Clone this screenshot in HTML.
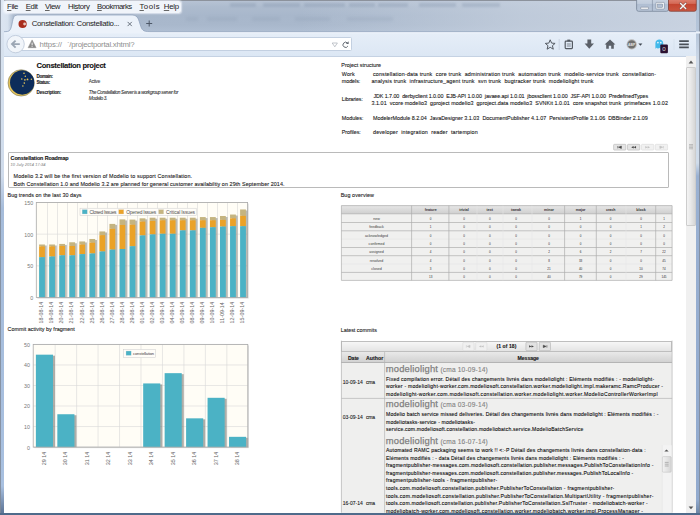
<!DOCTYPE html>
<html><head><meta charset="utf-8"><title>Constellation: Constellation project</title>
<style>
html,body{margin:0;padding:0;background:#fff;}
body{width:700px;height:515px;overflow:hidden;position:relative;font-family:"Liberation Sans",sans-serif;}
#win{position:absolute;left:0;top:0;width:700px;height:515px;overflow:hidden;background:#fff;}
.abs{position:absolute;white-space:nowrap;}
.t{position:absolute;white-space:nowrap;color:#1a1a1a;-webkit-text-stroke-width:0.1px;font-size:5.4px;line-height:7px;}
.b{font-weight:bold;}
u{text-decoration-thickness:0.5px;text-decoration-color:#666;text-underline-offset:0.6px;}
.i{font-style:italic;}
svg{position:absolute;left:0;top:0;}
</style></head><body><div id="win">

<div class="abs" style="left:0;top:0;width:700px;height:32px;background:linear-gradient(180deg,#b8c4d5 0,#adbbce 7px,#a8b7cb 16px,#a9b8cc 25px,#b0bfd3 32px);"></div>
<div class="abs" style="left:300px;top:0;width:400px;height:32px;background:linear-gradient(90deg,rgba(196,207,222,0) 0,rgba(200,210,224,0.7) 55%,rgba(206,215,228,0.85) 100%);"></div>
<div class="abs" style="left:230px;top:3.2px;width:26px;height:3.6px;background:#7f90a8;opacity:0.3;filter:blur(1.3px);"></div>
<div class="abs" style="left:263px;top:3.2px;width:37px;height:3.6px;background:#7f90a8;opacity:0.3;filter:blur(1.3px);"></div>
<div class="abs" style="left:304px;top:3.2px;width:41px;height:3.6px;background:#7f90a8;opacity:0.3;filter:blur(1.3px);"></div>
<div class="abs" style="left:349px;top:3.2px;width:26px;height:3.6px;background:#7f90a8;opacity:0.3;filter:blur(1.3px);"></div>
<div class="abs" style="left:378px;top:3.2px;width:30px;height:3.6px;background:#7f90a8;opacity:0.3;filter:blur(1.3px);"></div>
<div class="abs" style="left:419px;top:3.2px;width:37px;height:3.6px;background:#7f90a8;opacity:0.3;filter:blur(1.3px);"></div>
<div class="abs" style="left:462px;top:3.2px;width:38px;height:3.6px;background:#7f90a8;opacity:0.3;filter:blur(1.3px);"></div>
<div class="abs" style="left:186px;top:17.2px;width:12px;height:3.6px;background:#8797ad;opacity:0.22;filter:blur(1.4px);"></div>
<div class="abs" style="left:207px;top:17.2px;width:30px;height:3.6px;background:#8797ad;opacity:0.22;filter:blur(1.4px);"></div>
<div class="abs" style="left:252px;top:17.2px;width:28px;height:3.6px;background:#8797ad;opacity:0.22;filter:blur(1.4px);"></div>
<div class="abs" style="left:295px;top:17.2px;width:35px;height:3.6px;background:#8797ad;opacity:0.22;filter:blur(1.4px);"></div>
<div class="abs" style="left:347px;top:17.2px;width:46px;height:3.6px;background:#8797ad;opacity:0.22;filter:blur(1.4px);"></div>
<div class="abs" style="left:0;top:0;width:14px;height:32px;background:linear-gradient(90deg,rgba(226,234,245,0.95) 0,rgba(220,230,242,0.9) 55%,rgba(214,225,239,0) 100%);"></div>
<div class="abs" style="left:0;top:0;width:700px;height:0.8px;background:#8c929c;"></div>
<div class="abs" style="left:0;top:32px;width:700px;height:24.2px;background:linear-gradient(180deg,#e6eef8,#dce7f4);"></div>
<div class="abs" style="left:0;top:0;width:4px;height:515px;background:linear-gradient(180deg,#dde6f2 0,#d6e1ee 60px,#cfdbeb 176px,#a6bcda 208px,#a8c0e0 486px,#62799a 511px);"></div>
<div class="abs" style="left:0;top:0;width:0.8px;height:515px;background:#7f8896;opacity:0.8;"></div>
<div class="abs" style="left:696.2px;top:0;width:3.8px;height:515px;background:linear-gradient(180deg,#aebfd4 0,#b6c6da 33px,#cdd9e8 60px,#d0dcea 163px,#9ab1d2 176px,#92aace 500px,#7088a8 512px);"></div>
<div class="abs" style="left:699.3px;top:0;width:0.7px;height:515px;background:#7f8896;opacity:0.8;"></div>
<div class="abs" style="left:0;top:512.6px;width:700px;height:3px;background:#4f6b8b;"></div>

<div class="abs" style="left:4px;top:1.2px;width:177px;height:12px;background:rgba(243,247,252,0.95);border-radius:2.5px;box-shadow:0 0 1.5px 1px rgba(243,247,252,0.7);"></div>
<div class="abs" style="left:7px;top:2.15px;font-size:7.8px;line-height:10.1px;color:#1c1c1c;letter-spacing:-0.392px;"><u>F</u>ile</div>
<div class="abs" style="left:25.75px;top:2.15px;font-size:7.8px;line-height:10.1px;color:#1c1c1c;letter-spacing:-0.423px;"><u>E</u>dit</div>
<div class="abs" style="left:45px;top:2.15px;font-size:7.8px;line-height:10.1px;color:#1c1c1c;letter-spacing:-0.442px;"><u>V</u>iew</div>
<div class="abs" style="left:68px;top:2.15px;font-size:7.8px;line-height:10.1px;color:#1c1c1c;letter-spacing:-0.396px;">Hi<u>s</u>tory</div>
<div class="abs" style="left:97px;top:2.15px;font-size:7.8px;line-height:10.1px;color:#1c1c1c;letter-spacing:-0.474px;"><u>B</u>ookmarks</div>
<div class="abs" style="left:139.5px;top:2.15px;font-size:7.8px;line-height:10.1px;color:#1c1c1c;letter-spacing:0.458px;"><u>T</u>ools</div>
<div class="abs" style="left:163.8px;top:2.15px;font-size:7.8px;line-height:10.1px;color:#1c1c1c;letter-spacing:-0.236px;"><u>H</u>elp</div>

<svg width="700" height="60" viewBox="0 0 700 60">
<path d="M4 32.2 C10 32.2 10.5 30.8 12 24 C13.5 16.2 14 15 19 15 L131 15 C137 15 138 17.2 140 24 C142 30.6 143 31.6 150 31.6 L700 31.6 L700 33.4 L4 33.4 Z" fill="#ecf2fa"/>
<path d="M4 31.7 C10 31.7 10.5 30.6 12 24 C13.5 16.2 14 15 19 15 L131 15 C137 15 138 17.2 140 24 C142 30.6 143 31.6 150 31.6 L696 31.6" fill="none" stroke="#8b9eb9" stroke-width="0.7"/>
<circle cx="22.6" cy="24" r="4.1" fill="#a92d1d"/>
<circle cx="24.6" cy="24" r="1.4" fill="#e8c8c0"/>
<path d="M127.6 21.9 L131.8 26.1 M131.8 21.9 L127.6 26.1" stroke="#6a7480" stroke-width="1"/>
<path d="M146.2 23.5 H152.2 M149.2 20.5 V26.5" stroke="#4d5868" stroke-width="1"/>
</svg>
<div class="abs" style="left:31.75px;top:18.95px;font-size:7.8px;line-height:10.1px;color:#222;letter-spacing:-0.306px;">Constellation: Constellatio...</div>

<svg width="700" height="60" viewBox="0 0 700 60">
<defs>
<linearGradient id="wb" x1="0" y1="0" x2="0" y2="1"><stop offset="0" stop-color="#cdd7e4"/><stop offset="0.45" stop-color="#c2cddd"/><stop offset="0.5" stop-color="#b0bed2"/><stop offset="1" stop-color="#b9c6d8"/></linearGradient>
<linearGradient id="wc" x1="0" y1="0" x2="0" y2="1"><stop offset="0" stop-color="#e08f7f"/><stop offset="0.45" stop-color="#d56a57"/><stop offset="0.5" stop-color="#c44530"/><stop offset="1" stop-color="#cb5640"/></linearGradient>
</defs>
<rect x="636.6" y="-3" width="31.9" height="14.3" rx="2" fill="url(#wb)" stroke="#6f7c90" stroke-width="0.7"/>
<line x1="652.4" y1="0" x2="652.4" y2="11" stroke="#7a889c" stroke-width="0.6"/>
<rect x="668.5" y="-3" width="27.8" height="14.3" rx="2" fill="url(#wc)" stroke="#7a3a30" stroke-width="0.7"/>
<rect x="640.7" y="7.2" width="7.8" height="2" rx="0.4" fill="#fff" stroke="#6a7688" stroke-width="0.5"/>
<rect x="656.8" y="3.2" width="6.6" height="5" fill="none" stroke="#fff" stroke-width="1.3"/>
<rect x="656" y="2.4" width="8.2" height="6.6" rx="0.4" fill="none" stroke="#687488" stroke-width="0.45"/>
<rect x="657.6" y="4" width="5" height="3.4" fill="none" stroke="#687488" stroke-width="0.4"/>
<path d="M680.6 3.4 L685.6 8.4 M685.6 3.4 L680.6 8.4" stroke="#8a4a40" stroke-width="2.3" stroke-linecap="square"/>
<path d="M680.6 3.4 L685.6 8.4 M685.6 3.4 L680.6 8.4" stroke="#f4f4f4" stroke-width="1.4" stroke-linecap="square"/>
</svg>

<div class="abs" style="left:17px;top:37.2px;width:335.4px;height:13.7px;background:#fff;border:0.6px solid #c3d0e1;border-radius:1.5px;box-sizing:border-box;"></div>
<svg width="700" height="60" viewBox="0 0 700 60">
<circle cx="15.6" cy="44.1" r="8.7" fill="#f1f5fa" stroke="#b3c0d2" stroke-width="0.7"/>
<path d="M19.8 44.1 H12.2 M15.6 40.6 L12 44.1 L15.6 47.6" fill="none" stroke="#9ba6b4" stroke-width="1.9"/>
<path d="M32.1 39.9 L36.1 47.7 H28.1 Z" fill="#8a8a8a" stroke="#8a8a8a" stroke-width="0.5" stroke-linejoin="round"/>
<rect x="31.65" y="42.6" width="0.9" height="2.7" fill="#fff"/><rect x="31.65" y="45.9" width="0.9" height="0.9" fill="#fff"/>
<path d="M332.2 43 L337.4 43 L334.8 46.8 Z" fill="none" stroke="#a8aeb6" stroke-width="0.7"/>
<path d="M347.6 43.2 A2.6 2.6 0 1 0 347.9 46" fill="none" stroke="#606770" stroke-width="0.95"/>
<path d="M348.6 41.3 V44 H345.9 Z" fill="#606770"/>
<!-- star -->
<path d="M550.2 39.8 L551.6 43.1 L555.1 43.4 L552.4 45.7 L553.3 49.2 L550.2 47.3 L547.1 49.2 L548 45.7 L545.3 43.4 L548.8 43.1 Z" fill="none" stroke="#545a62" stroke-width="1" stroke-linejoin="round"/>
<line x1="559.2" y1="39" x2="559.2" y2="50" stroke="#b9c4d4" stroke-width="0.6"/>
<!-- clipboard -->
<rect x="565.2" y="41.2" width="7.2" height="7.4" rx="0.8" fill="none" stroke="#545a62" stroke-width="1.2"/>
<rect x="567.3" y="39.6" width="3" height="1.8" fill="#545a62"/>
<path d="M566.8 44 H570.8 M566.8 46 H570.8" stroke="#545a62" stroke-width="0.7"/>
<!-- download -->
<path d="M587.4 39.5 H591.2 V43.6 H594 L589.3 48.8 L584.6 43.6 H587.4 Z" fill="#5b6068"/>
<!-- home -->
<path d="M610 39.6 L615.4 44.6 H613.8 V48.8 H611.2 V45.8 H608.8 V48.8 H606.2 V44.6 H604.6 Z" fill="#5b6068"/>
<!-- ABP -->
<circle cx="631.7" cy="44.4" r="5.1" fill="#b9b9b9"/><circle cx="631.7" cy="44.4" r="4.2" fill="#6f6f6f"/>
<text x="631.7" y="45.6" font-size="3.4" font-weight="bold" fill="#e4e4e4" text-anchor="middle" font-family="Liberation Sans, sans-serif">ABP</text>
<path d="M638.4 43.4 H642.4 L640.4 45.8 Z" fill="#3f4650"/>
<!-- ghost -->
<path d="M655.4 48.8 V43.2 C655.4 38.2 663.2 38.2 663.2 43.2 V48.8 L661.9 47.7 L660.6 48.8 L659.3 47.7 L658 48.8 L656.7 47.7 Z" fill="#42b9ea"/>
<circle cx="657.9" cy="42.6" r="0.85" fill="#e8f6fd"/><circle cx="660.8" cy="42.6" r="0.85" fill="#e8f6fd"/>
<rect x="660.3" y="44.6" width="7.6" height="8.6" rx="1" fill="#2a1030"/>
<text x="664.1" y="51.3" font-size="6.2" fill="#d8d8d8" text-anchor="middle" font-family="Liberation Sans, sans-serif">0</text>
<line x1="674" y1="39" x2="674" y2="50" stroke="#cfd9e6" stroke-width="0.5"/>
<!-- hamburger -->
<path d="M679.2 41.2 H688.8 M679.2 44.3 H688.8 M679.2 47.4 H688.8" stroke="#4a5058" stroke-width="1.7"/>
</svg>
<div class="abs" style="left:39.5px;top:39.95px;font-size:7.8px;line-height:10.1px;color:#8f8f8f;letter-spacing:-0.145px;">https://</div>
<div class="abs" style="left:67px;top:39.95px;font-size:7.8px;line-height:10.1px;color:#8f8f8f;letter-spacing:-0.254px;">`/projectportal.xhtml?</div>

<div class="abs" style="left:4px;top:56.3px;width:692px;height:456.3px;background:#fff;"></div>
<div class="abs" style="left:4px;top:55.6px;width:692px;height:0.8px;background:#c5d2e3;"></div>
<div class="abs" style="left:686px;top:56.3px;width:10px;height:456.3px;background:#f0f0f0;"></div>
<div class="abs" style="left:686.2px;top:67px;width:9.6px;height:159.4px;background:linear-gradient(90deg,#f4f4f4 0,#e9e9e9 45%,#d6d6d6 100%);border:0.5px solid #cdcdcd;box-sizing:border-box;border-radius:1px;"></div>
<svg width="700" height="515" viewBox="0 0 700 515">
<path d="M688.6 63.4 L691 60.6 L693.4 63.4 Z" fill="#555"/>
<path d="M688.6 506.4 L691 509.2 L693.4 506.4 Z" fill="#555"/>
<path d="M689 144.6 H693 M689 146 H693 M689 147.4 H693 M689 148.8 H693" stroke="#9a9a9a" stroke-width="0.6"/>
</svg>
<svg width="700" height="515" viewBox="0 0 700 515">
<defs><clipPath id="lg"><circle cx="21.2" cy="82.9" r="13.2"/></clipPath></defs>
<circle cx="21.2" cy="82.9" r="13.2" fill="#e3c35a"/>
<circle cx="21.2" cy="82.9" r="13.2" fill="none" stroke="#6b6a5a" stroke-width="0.5"/>
<circle cx="22.25" cy="82.45" r="12.25" fill="#0d2c5a" clip-path="url(#lg)"/>
<g fill="#e6c65a">
<circle cx="24" cy="73.3" r="0.8"/><circle cx="25.3" cy="76.2" r="0.75"/><circle cx="21.8" cy="79" r="0.75"/>
<circle cx="24.9" cy="79.9" r="0.8"/><circle cx="27.5" cy="79.4" r="0.9"/><circle cx="31.4" cy="79.2" r="0.8"/>
<circle cx="24.3" cy="83.1" r="0.8"/><circle cx="22.9" cy="85.9" r="0.75"/>
</g>
</svg>
<div class="t b" style="left:36.6px;top:61px;font-size:7.6px;line-height:10px;color:#111;letter-spacing:-0.314px;">Constellation project</div>
<div class="t b" style="left:36.6px;top:72.60px;letter-spacing:-0.343px;font-size:4.6px;color:#222;">Domain:</div>
<div class="t b" style="left:36.6px;top:78.60px;letter-spacing:-0.334px;font-size:4.6px;color:#222;">Status:</div>
<div class="t b" style="left:36.6px;top:88.70px;letter-spacing:-0.195px;font-size:4.6px;color:#222;">Description:</div>
<div class="t " style="left:88.8px;top:78.40px;letter-spacing:-0.213px;font-size:4.6px;color:#444;">Active</div>
<div class="t i" style="left:88.8px;top:89.30px;letter-spacing:-0.352px;font-size:4.8px;color:#3a3a3a;">The Constellation Server is a workgroup server for</div>
<div class="t i" style="left:88.8px;top:95.30px;letter-spacing:-0.390px;font-size:4.8px;color:#3a3a3a;">Modelio 3.</div>
<div class="t " style="left:341.3px;top:61.80px;letter-spacing:0.034px;">Project structure</div>
<div class="t " style="left:341.8px;top:70.80px;letter-spacing:0.100px;">Work</div>
<div class="t " style="left:341.8px;top:78.20px;letter-spacing:-0.058px;">models:</div>
<div class="t " style="left:372.9px;top:70.80px;letter-spacing:0.160px;">constellation-data trunk&nbsp; core trunk&nbsp; administration trunk&nbsp; automation trunk&nbsp; modelio-service trunk&nbsp; constellation-</div>
<div class="t " style="left:371.4px;top:78.20px;letter-spacing:0.141px;">analysis trunk&nbsp; infrastructure_agent trunk&nbsp; svn trunk&nbsp; bugtracker trunk&nbsp; modeliolight trunk</div>
<div class="t " style="left:341.8px;top:96.20px;letter-spacing:-0.121px;">Libraries:</div>
<div class="t " style="left:373.4px;top:92.60px;letter-spacing:-0.077px;">JDK 1.7.00&nbsp; derbyclient 1.0.00&nbsp; EJB-API 1.0.00&nbsp; javaee.api 1.0.01&nbsp; jbossclient 1.0.00&nbsp; JSF-API 1.0.00&nbsp; PredefinedTypes</div>
<div class="t " style="left:371.4px;top:100.10px;letter-spacing:0.049px;">3.1.01&nbsp; vcore modelio3&nbsp; gproject modelio3&nbsp; gproject.data modelio3&nbsp; SVNKit 1.0.01&nbsp; core snapshot trunk&nbsp; primefaces 1.0.02</div>
<div class="t " style="left:341.8px;top:114.50px;letter-spacing:-0.039px;">Modules:</div>
<div class="t " style="left:372.9px;top:114.50px;letter-spacing:0.010px;">ModelerModule 8.2.04&nbsp; JavaDesigner 3.1.03&nbsp; DocumentPublisher 4.1.07&nbsp; PersistentProfile 3.1.06&nbsp; DBBinder 2.1.09</div>
<div class="t " style="left:341.8px;top:129.00px;letter-spacing:-0.056px;">Profiles:</div>
<div class="t " style="left:373px;top:129.00px;letter-spacing:0.141px;">developer&nbsp; integration&nbsp; reader&nbsp; tartempion</div>
<svg width="700" height="515" viewBox="0 0 700 515">
<rect x="613.6" y="144.3" width="12.3" height="5.8" rx="0.8" fill="#e4e4e4" stroke="#aaa" stroke-width="0.5"/>
<path d="M617.75 146.0 V148.4 M621.35 146.0 L618.55 147.2 L621.35 148.4 Z" stroke="#444" stroke-width="0.6" fill="#444"/>
<rect x="627.5" y="144.3" width="12.3" height="5.8" rx="0.8" fill="#e4e4e4" stroke="#aaa" stroke-width="0.5"/>
<path d="M633.65 146.0 L631.25 147.2 L633.65 148.4 Z M636.05 146.0 L633.65 147.2 L636.05 148.4 Z" fill="#444"/>
<rect x="641.5" y="144.3" width="12.3" height="5.8" rx="0.8" fill="#f1f1f1" stroke="#d4d4d4" stroke-width="0.5"/>
<path d="M647.65 146.0 L650.05 147.2 L647.65 148.4 Z M645.25 146.0 L647.65 147.2 L645.25 148.4 Z" fill="#c4c4c4"/>
<rect x="655.3" y="144.3" width="12.3" height="5.8" rx="0.8" fill="#f1f1f1" stroke="#d4d4d4" stroke-width="0.5"/>
<path d="M663.4499999999999 146.0 V148.4 M659.8499999999999 146.0 L662.65 147.2 L659.8499999999999 148.4 Z" stroke="#c4c4c4" stroke-width="0.6" fill="#c4c4c4"/>
</svg>
<div class="abs" style="left:8.2px;top:151.5px;width:660.5px;height:36.2px;border:0.7px solid #bababa;box-sizing:border-box;border-radius:1px;background:#fff;"></div>
<div class="t b" style="left:10.6px;top:154.50px;letter-spacing:-0.110px;font-size:5.4px;color:#111;">Constellation Roadmap</div>
<div class="t i" style="left:10.6px;top:160.80px;letter-spacing:0.113px;font-size:3.9px;color:#999;">10 July 2014 17:34</div>
<div class="t " style="left:13.5px;top:172.80px;letter-spacing:0.139px;color:#222;">Modelio 3.2 will be the first version of Modelio to support Constellation.</div>
<div class="t " style="left:13.5px;top:180.80px;letter-spacing:0.082px;color:#222;">Both Constellation 1.0 and Modelio 3.2 are planned for general customer availabiltiy on 29th September 2014.</div>
<div class="t " style="left:7.5px;top:191.60px;letter-spacing:0.043px;color:#222;">Bug trends on the last 30 days</div>
<div class="t " style="left:340.7px;top:191.80px;letter-spacing:0.082px;color:#222;">Bug overview</div>
<div class="t " style="left:7.5px;top:326.10px;letter-spacing:0.033px;color:#222;">Commit activity by fragment</div>
<div class="t " style="left:340.7px;top:326.50px;letter-spacing:-0.008px;color:#222;">Latest commits</div>
<svg width="700" height="515" viewBox="0 0 700 515">
<rect x="37.3" y="203.5" width="211.3" height="95.0" fill="#bdbdbd" opacity="0.6"/>
<rect x="36.3" y="202.5" width="211.3" height="95.0" fill="#fffdf6"/>
<path d="M36.3 297.50 H247.6 M36.3 265.83 H247.6 M36.3 234.17 H247.6 M36.3 202.50 H247.6 M47.50 202.5 V297.5 M57.50 202.5 V297.5 M67.50 202.5 V297.5 M77.50 202.5 V297.5 M87.50 202.5 V297.5 M97.50 202.5 V297.5 M107.50 202.5 V297.5 M117.50 202.5 V297.5 M127.50 202.5 V297.5 M137.50 202.5 V297.5 M147.50 202.5 V297.5 M157.50 202.5 V297.5 M167.50 202.5 V297.5 M177.50 202.5 V297.5 M187.50 202.5 V297.5 M197.50 202.5 V297.5 M207.50 202.5 V297.5 M217.50 202.5 V297.5 M227.50 202.5 V297.5 M237.50 202.5 V297.5" stroke="#d8d8d8" stroke-width="0.6" fill="none"/>
<rect x="40.90" y="245.49" width="5.80" height="52.01" fill="#85857c" opacity="0.55"/>
<rect x="39.10" y="244.49" width="5.8" height="1.84" fill="#c5b47f"/>
<rect x="39.10" y="246.33" width="5.8" height="10.83" fill="#eaa228"/>
<rect x="39.10" y="257.16" width="5.8" height="40.34" fill="#4bb2c5"/>
<rect x="50.95" y="245.49" width="5.80" height="52.01" fill="#85857c" opacity="0.55"/>
<rect x="49.15" y="244.49" width="5.8" height="1.84" fill="#c5b47f"/>
<rect x="49.15" y="246.33" width="5.8" height="10.20" fill="#eaa228"/>
<rect x="49.15" y="256.52" width="5.8" height="40.98" fill="#4bb2c5"/>
<rect x="61.00" y="244.92" width="5.80" height="52.58" fill="#85857c" opacity="0.55"/>
<rect x="59.20" y="243.92" width="5.8" height="2.03" fill="#c5b47f"/>
<rect x="59.20" y="245.95" width="5.8" height="9.37" fill="#eaa228"/>
<rect x="59.20" y="255.32" width="5.8" height="42.18" fill="#4bb2c5"/>
<rect x="71.05" y="243.27" width="5.80" height="54.23" fill="#85857c" opacity="0.55"/>
<rect x="69.25" y="242.27" width="5.8" height="3.67" fill="#c5b47f"/>
<rect x="69.25" y="245.95" width="5.8" height="9.37" fill="#eaa228"/>
<rect x="69.25" y="255.32" width="5.8" height="42.18" fill="#4bb2c5"/>
<rect x="81.10" y="242.45" width="5.80" height="55.05" fill="#85857c" opacity="0.55"/>
<rect x="79.30" y="241.45" width="5.8" height="3.04" fill="#c5b47f"/>
<rect x="79.30" y="244.49" width="5.8" height="9.63" fill="#eaa228"/>
<rect x="79.30" y="254.12" width="5.8" height="43.38" fill="#4bb2c5"/>
<rect x="91.15" y="239.98" width="5.80" height="57.52" fill="#85857c" opacity="0.55"/>
<rect x="89.35" y="238.98" width="5.8" height="3.67" fill="#c5b47f"/>
<rect x="89.35" y="242.65" width="5.8" height="10.83" fill="#eaa228"/>
<rect x="89.35" y="253.48" width="5.8" height="44.02" fill="#4bb2c5"/>
<rect x="101.20" y="232.44" width="5.80" height="65.06" fill="#85857c" opacity="0.55"/>
<rect x="99.40" y="231.44" width="5.8" height="3.67" fill="#c5b47f"/>
<rect x="99.40" y="235.12" width="5.8" height="16.34" fill="#eaa228"/>
<rect x="99.40" y="251.46" width="5.8" height="46.04" fill="#4bb2c5"/>
<rect x="111.25" y="224.91" width="5.80" height="72.59" fill="#85857c" opacity="0.55"/>
<rect x="109.45" y="223.91" width="5.8" height="4.88" fill="#c5b47f"/>
<rect x="109.45" y="228.78" width="5.8" height="20.84" fill="#eaa228"/>
<rect x="109.45" y="249.62" width="5.8" height="47.88" fill="#4bb2c5"/>
<rect x="121.30" y="220.41" width="5.80" height="77.09" fill="#85857c" opacity="0.55"/>
<rect x="119.50" y="219.41" width="5.8" height="5.51" fill="#c5b47f"/>
<rect x="119.50" y="224.92" width="5.8" height="24.07" fill="#eaa228"/>
<rect x="119.50" y="248.99" width="5.8" height="48.51" fill="#4bb2c5"/>
<rect x="131.35" y="220.60" width="5.80" height="76.90" fill="#85857c" opacity="0.55"/>
<rect x="129.55" y="219.60" width="5.8" height="5.07" fill="#c5b47f"/>
<rect x="129.55" y="224.67" width="5.8" height="21.53" fill="#eaa228"/>
<rect x="129.55" y="246.20" width="5.8" height="51.30" fill="#4bb2c5"/>
<rect x="141.40" y="219.33" width="5.80" height="78.17" fill="#85857c" opacity="0.55"/>
<rect x="139.60" y="218.33" width="5.8" height="3.17" fill="#c5b47f"/>
<rect x="139.60" y="221.50" width="5.8" height="13.93" fill="#eaa228"/>
<rect x="139.60" y="235.43" width="5.8" height="62.07" fill="#4bb2c5"/>
<rect x="151.45" y="218.70" width="5.80" height="78.80" fill="#85857c" opacity="0.55"/>
<rect x="149.65" y="217.70" width="5.8" height="3.17" fill="#c5b47f"/>
<rect x="149.65" y="220.87" width="5.8" height="13.55" fill="#eaa228"/>
<rect x="149.65" y="234.42" width="5.8" height="63.08" fill="#4bb2c5"/>
<rect x="161.50" y="218.70" width="5.80" height="78.80" fill="#85857c" opacity="0.55"/>
<rect x="159.70" y="217.70" width="5.8" height="2.53" fill="#c5b47f"/>
<rect x="159.70" y="220.23" width="5.8" height="13.55" fill="#eaa228"/>
<rect x="159.70" y="233.79" width="5.8" height="63.71" fill="#4bb2c5"/>
<rect x="171.55" y="218.70" width="5.80" height="78.80" fill="#85857c" opacity="0.55"/>
<rect x="169.75" y="217.70" width="5.8" height="2.53" fill="#c5b47f"/>
<rect x="169.75" y="220.23" width="5.8" height="13.55" fill="#eaa228"/>
<rect x="169.75" y="233.79" width="5.8" height="63.71" fill="#4bb2c5"/>
<rect x="181.60" y="218.70" width="5.80" height="78.80" fill="#85857c" opacity="0.55"/>
<rect x="179.80" y="217.70" width="5.8" height="2.53" fill="#c5b47f"/>
<rect x="179.80" y="220.23" width="5.8" height="10.13" fill="#eaa228"/>
<rect x="179.80" y="230.37" width="5.8" height="67.13" fill="#4bb2c5"/>
<rect x="191.65" y="218.70" width="5.80" height="78.80" fill="#85857c" opacity="0.55"/>
<rect x="189.85" y="217.70" width="5.8" height="2.53" fill="#c5b47f"/>
<rect x="189.85" y="220.23" width="5.8" height="10.13" fill="#eaa228"/>
<rect x="189.85" y="230.37" width="5.8" height="67.13" fill="#4bb2c5"/>
<rect x="201.70" y="218.07" width="5.80" height="79.43" fill="#85857c" opacity="0.55"/>
<rect x="199.90" y="217.07" width="5.8" height="3.17" fill="#c5b47f"/>
<rect x="199.90" y="220.23" width="5.8" height="7.60" fill="#eaa228"/>
<rect x="199.90" y="227.83" width="5.8" height="69.67" fill="#4bb2c5"/>
<rect x="211.75" y="218.07" width="5.80" height="79.43" fill="#85857c" opacity="0.55"/>
<rect x="209.95" y="217.07" width="5.8" height="3.17" fill="#c5b47f"/>
<rect x="209.95" y="220.23" width="5.8" height="6.97" fill="#eaa228"/>
<rect x="209.95" y="227.20" width="5.8" height="70.30" fill="#4bb2c5"/>
<rect x="221.80" y="216.99" width="5.80" height="80.51" fill="#85857c" opacity="0.55"/>
<rect x="220.00" y="215.99" width="5.8" height="3.86" fill="#c5b47f"/>
<rect x="220.00" y="219.85" width="5.8" height="6.71" fill="#eaa228"/>
<rect x="220.00" y="226.57" width="5.8" height="70.93" fill="#4bb2c5"/>
<rect x="231.85" y="215.53" width="5.80" height="81.97" fill="#85857c" opacity="0.55"/>
<rect x="230.05" y="214.53" width="5.8" height="3.80" fill="#c5b47f"/>
<rect x="230.05" y="218.33" width="5.8" height="7.85" fill="#eaa228"/>
<rect x="230.05" y="226.19" width="5.8" height="71.31" fill="#4bb2c5"/>
<rect x="241.90" y="210.47" width="5.80" height="87.03" fill="#85857c" opacity="0.55"/>
<rect x="240.10" y="209.47" width="5.8" height="6.33" fill="#c5b47f"/>
<rect x="240.10" y="215.80" width="5.8" height="10.39" fill="#eaa228"/>
<rect x="240.10" y="226.19" width="5.8" height="71.31" fill="#4bb2c5"/>
<rect x="36.3" y="202.5" width="211.3" height="95.0" fill="none" stroke="#aaa" stroke-width="0.8"/>
<text x="33.099999999999994" y="299.90" font-size="5.3" fill="#777" text-anchor="end" font-family="Liberation Sans, sans-serif">0</text>
<text x="33.099999999999994" y="268.23" font-size="5.3" fill="#777" text-anchor="end" font-family="Liberation Sans, sans-serif">50</text>
<text x="33.099999999999994" y="236.57" font-size="5.3" fill="#777" text-anchor="end" font-family="Liberation Sans, sans-serif">100</text>
<text x="33.099999999999994" y="204.90" font-size="5.3" fill="#777" text-anchor="end" font-family="Liberation Sans, sans-serif">150</text>
<text transform="translate(43.30 323.4) rotate(-90)" font-size="5.4" fill="#666" font-family="Liberation Sans, sans-serif">18-08-14</text>
<text transform="translate(53.35 323.4) rotate(-90)" font-size="5.4" fill="#666" font-family="Liberation Sans, sans-serif">19-08-14</text>
<text transform="translate(63.40 323.4) rotate(-90)" font-size="5.4" fill="#666" font-family="Liberation Sans, sans-serif">20-08-14</text>
<text transform="translate(73.45 323.4) rotate(-90)" font-size="5.4" fill="#666" font-family="Liberation Sans, sans-serif">21-08-14</text>
<text transform="translate(83.50 323.4) rotate(-90)" font-size="5.4" fill="#666" font-family="Liberation Sans, sans-serif">22-08-14</text>
<text transform="translate(93.55 323.4) rotate(-90)" font-size="5.4" fill="#666" font-family="Liberation Sans, sans-serif">25-08-14</text>
<text transform="translate(103.60 323.4) rotate(-90)" font-size="5.4" fill="#666" font-family="Liberation Sans, sans-serif">26-08-14</text>
<text transform="translate(113.65 323.4) rotate(-90)" font-size="5.4" fill="#666" font-family="Liberation Sans, sans-serif">27-08-14</text>
<text transform="translate(123.70 323.4) rotate(-90)" font-size="5.4" fill="#666" font-family="Liberation Sans, sans-serif">28-08-14</text>
<text transform="translate(133.75 323.4) rotate(-90)" font-size="5.4" fill="#666" font-family="Liberation Sans, sans-serif">29-08-14</text>
<text transform="translate(143.80 323.4) rotate(-90)" font-size="5.4" fill="#666" font-family="Liberation Sans, sans-serif">01-09-14</text>
<text transform="translate(153.85 323.4) rotate(-90)" font-size="5.4" fill="#666" font-family="Liberation Sans, sans-serif">02-09-14</text>
<text transform="translate(163.90 323.4) rotate(-90)" font-size="5.4" fill="#666" font-family="Liberation Sans, sans-serif">03-09-14</text>
<text transform="translate(173.95 323.4) rotate(-90)" font-size="5.4" fill="#666" font-family="Liberation Sans, sans-serif">04-09-14</text>
<text transform="translate(184.00 323.4) rotate(-90)" font-size="5.4" fill="#666" font-family="Liberation Sans, sans-serif">05-09-14</text>
<text transform="translate(194.05 323.4) rotate(-90)" font-size="5.4" fill="#666" font-family="Liberation Sans, sans-serif">08-09-14</text>
<text transform="translate(204.10 323.4) rotate(-90)" font-size="5.4" fill="#666" font-family="Liberation Sans, sans-serif">09-09-14</text>
<text transform="translate(214.15 323.4) rotate(-90)" font-size="5.4" fill="#666" font-family="Liberation Sans, sans-serif">10-09-14</text>
<text transform="translate(224.20 323.4) rotate(-90)" font-size="5.4" fill="#666" font-family="Liberation Sans, sans-serif">11-09-14</text>
<text transform="translate(234.25 323.4) rotate(-90)" font-size="5.4" fill="#666" font-family="Liberation Sans, sans-serif">12-09-14</text>
<text transform="translate(244.30 323.4) rotate(-90)" font-size="5.4" fill="#666" font-family="Liberation Sans, sans-serif">15-09-14</text>
<rect x="80" y="208.2" width="116.2" height="7.2" fill="#fffdf8" stroke="#ccc" stroke-width="0.5"/>
<rect x="82.1" y="209.6" width="5.2" height="4.4" fill="#4bb2c5" stroke="#ddd" stroke-width="0.3"/>
<text x="89.6" y="214.3" font-size="4.9" fill="#505050" textLength="26.9" lengthAdjust="spacing" font-family="Liberation Sans, sans-serif">Closed Issues</text>
<rect x="118.6" y="209.6" width="5.2" height="4.4" fill="#eaa228" stroke="#ddd" stroke-width="0.3"/>
<text x="126.2" y="214.3" font-size="4.9" fill="#505050" textLength="30" lengthAdjust="spacing" font-family="Liberation Sans, sans-serif">Opened Issues</text>
<rect x="158.5" y="209.6" width="5.2" height="4.4" fill="#c5b47f" stroke="#ddd" stroke-width="0.3"/>
<text x="166" y="214.3" font-size="4.9" fill="#505050" textLength="29" lengthAdjust="spacing" font-family="Liberation Sans, sans-serif">Critical Issues</text>
</svg>
<svg width="700" height="515" viewBox="0 0 700 515">
<rect x="34.2" y="345.4" width="214.60000000000002" height="102.70000000000005" fill="#bdbdbd" opacity="0.6"/>
<rect x="33.2" y="344.4" width="214.60000000000002" height="102.70000000000005" fill="#fffdf6"/>
<path d="M33.2 447.10 H247.8 M33.2 426.56 H247.8 M33.2 406.02 H247.8 M33.2 385.48 H247.8 M33.2 364.94 H247.8 M33.2 344.40 H247.8 M55.16 344.4 V447.1 M76.62 344.4 V447.1 M98.08 344.4 V447.1 M119.54 344.4 V447.1 M141.00 344.4 V447.1 M162.46 344.4 V447.1 M183.92 344.4 V447.1 M205.38 344.4 V447.1 M226.84 344.4 V447.1" stroke="#d8d8d8" stroke-width="0.6" fill="none"/>
<rect x="37.88" y="355.67" width="17.1" height="91.43" fill="#6e6e68" opacity="0.55"/>
<rect x="35.88" y="354.67" width="17.1" height="92.43" fill="#4bb2c5"/>
<rect x="59.34" y="415.24" width="17.1" height="31.86" fill="#6e6e68" opacity="0.55"/>
<rect x="57.34" y="414.24" width="17.1" height="32.86" fill="#4bb2c5"/>
<rect x="145.18" y="384.43" width="17.1" height="62.67" fill="#6e6e68" opacity="0.55"/>
<rect x="143.18" y="383.43" width="17.1" height="63.67" fill="#4bb2c5"/>
<rect x="166.64" y="374.16" width="17.1" height="72.94" fill="#6e6e68" opacity="0.55"/>
<rect x="164.64" y="373.16" width="17.1" height="73.94" fill="#4bb2c5"/>
<rect x="188.10" y="419.34" width="17.1" height="27.76" fill="#6e6e68" opacity="0.55"/>
<rect x="186.10" y="418.34" width="17.1" height="28.76" fill="#4bb2c5"/>
<rect x="209.56" y="398.80" width="17.1" height="48.30" fill="#6e6e68" opacity="0.55"/>
<rect x="207.56" y="397.80" width="17.1" height="49.30" fill="#4bb2c5"/>
<rect x="231.02" y="437.83" width="17.1" height="9.27" fill="#6e6e68" opacity="0.55"/>
<rect x="229.02" y="436.83" width="17.1" height="10.27" fill="#4bb2c5"/>
<rect x="33.2" y="344.4" width="214.60000000000002" height="102.70000000000005" fill="none" stroke="#aaa" stroke-width="0.8"/>
<text x="30.000000000000004" y="449.50" font-size="5.3" fill="#777" text-anchor="end" font-family="Liberation Sans, sans-serif">0</text>
<text x="30.000000000000004" y="428.96" font-size="5.3" fill="#777" text-anchor="end" font-family="Liberation Sans, sans-serif">10</text>
<text x="30.000000000000004" y="408.42" font-size="5.3" fill="#777" text-anchor="end" font-family="Liberation Sans, sans-serif">20</text>
<text x="30.000000000000004" y="387.88" font-size="5.3" fill="#777" text-anchor="end" font-family="Liberation Sans, sans-serif">30</text>
<text x="30.000000000000004" y="367.34" font-size="5.3" fill="#777" text-anchor="end" font-family="Liberation Sans, sans-serif">40</text>
<text x="30.000000000000004" y="346.80" font-size="5.3" fill="#777" text-anchor="end" font-family="Liberation Sans, sans-serif">50</text>
<text transform="translate(45.83 465.2) rotate(-90)" font-size="5.4" fill="#666" font-family="Liberation Sans, sans-serif">29 14</text>
<text transform="translate(67.29 465.2) rotate(-90)" font-size="5.4" fill="#666" font-family="Liberation Sans, sans-serif">30 14</text>
<text transform="translate(88.75 465.2) rotate(-90)" font-size="5.4" fill="#666" font-family="Liberation Sans, sans-serif">31 14</text>
<text transform="translate(110.21 465.2) rotate(-90)" font-size="5.4" fill="#666" font-family="Liberation Sans, sans-serif">32 14</text>
<text transform="translate(131.67 465.2) rotate(-90)" font-size="5.4" fill="#666" font-family="Liberation Sans, sans-serif">33 14</text>
<text transform="translate(153.13 465.2) rotate(-90)" font-size="5.4" fill="#666" font-family="Liberation Sans, sans-serif">34 14</text>
<text transform="translate(174.59 465.2) rotate(-90)" font-size="5.4" fill="#666" font-family="Liberation Sans, sans-serif">35 14</text>
<text transform="translate(196.05 465.2) rotate(-90)" font-size="5.4" fill="#666" font-family="Liberation Sans, sans-serif">36 14</text>
<text transform="translate(217.51 465.2) rotate(-90)" font-size="5.4" fill="#666" font-family="Liberation Sans, sans-serif">37 14</text>
<text transform="translate(238.97 465.2) rotate(-90)" font-size="5.4" fill="#666" font-family="Liberation Sans, sans-serif">38 14</text>
<rect x="123.3" y="349.4" width="32.2" height="8.2" fill="#fffdf8" stroke="#ccc" stroke-width="0.5"/>
<rect x="126" y="351" width="5.2" height="4.4" fill="#4bb2c5" stroke="#ddd" stroke-width="0.3"/>
<text x="133.1" y="354.6" font-size="4" fill="#3c3c3c" textLength="21" lengthAdjust="spacing" font-family="Liberation Sans, sans-serif">constellation</text>
</svg>
<svg width="700" height="515" viewBox="0 0 700 515">
<defs><linearGradient id="hg" x1="0" y1="0" x2="0" y2="1"><stop offset="0" stop-color="#e6e6e6"/><stop offset="1" stop-color="#cfcfcf"/></linearGradient></defs>
<rect x="341.4" y="205.6" width="330.70000000000005" height="74.79999999999998" fill="#f0f0ef"/>
<rect x="341.4" y="205.6" width="330.70000000000005" height="8.200000000000017" fill="url(#hg)"/>
<path d="M341.4 205.6 H672.1 M341.4 213.8 H672.1 M341.4 222.5 H672.1 M341.4 230.8 H672.1 M341.4 247.5 H672.1 M341.4 255.7 H672.1 M341.4 272.4 H672.1 M341.4 280.4 H672.1" stroke="#aeaeae" stroke-width="0.7" fill="none"/>
<path d="M341.4 239.1 H672.1 M341.4 264.0 H672.1" stroke="#e2e2e2" stroke-width="0.5" fill="none"/>
<path d="M341.4 205.6 V280.4 M411.6 205.6 V280.4 M448.9 205.6 V280.4 M564.6 205.6 V280.4 M596.3 205.6 V280.4 M655.7 205.6 V280.4 M672.1 205.6 V280.4" stroke="#aeaeae" stroke-width="0.7" fill="none"/>
<path d="M477 205.6 V280.4 M503 205.6 V280.4 M532 205.6 V280.4 M626 205.6 V280.4" stroke="#e4e4e4" stroke-width="0.5" fill="none"/>
<text x="430.7" y="211.40" font-size="3.6" font-weight="bold" fill="#333" text-anchor="middle" font-family="Liberation Sans, sans-serif">feature</text>
<text x="464" y="211.40" font-size="3.6" font-weight="bold" fill="#333" text-anchor="middle" font-family="Liberation Sans, sans-serif">trivial</text>
<text x="489.8" y="211.40" font-size="3.6" font-weight="bold" fill="#333" text-anchor="middle" font-family="Liberation Sans, sans-serif">text</text>
<text x="516" y="211.40" font-size="3.6" font-weight="bold" fill="#333" text-anchor="middle" font-family="Liberation Sans, sans-serif">tweak</text>
<text x="549" y="211.40" font-size="3.6" font-weight="bold" fill="#333" text-anchor="middle" font-family="Liberation Sans, sans-serif">minor</text>
<text x="580.6" y="211.40" font-size="3.6" font-weight="bold" fill="#333" text-anchor="middle" font-family="Liberation Sans, sans-serif">major</text>
<text x="610.7" y="211.40" font-size="3.6" font-weight="bold" fill="#333" text-anchor="middle" font-family="Liberation Sans, sans-serif">crash</text>
<text x="641" y="211.40" font-size="3.6" font-weight="bold" fill="#333" text-anchor="middle" font-family="Liberation Sans, sans-serif">block</text>
<text x="376.5" y="219.85" font-size="3.6" fill="#3a3a3a" text-anchor="middle" font-family="Liberation Sans, sans-serif">new</text>
<text x="430.7" y="219.85" font-size="3" fill="#2a2a2a" text-anchor="middle" font-family="Liberation Sans, sans-serif">0</text>
<text x="464" y="219.85" font-size="3" fill="#2a2a2a" text-anchor="middle" font-family="Liberation Sans, sans-serif">0</text>
<text x="489.8" y="219.85" font-size="3" fill="#2a2a2a" text-anchor="middle" font-family="Liberation Sans, sans-serif">0</text>
<text x="516" y="219.85" font-size="3" fill="#2a2a2a" text-anchor="middle" font-family="Liberation Sans, sans-serif">0</text>
<text x="549" y="219.85" font-size="3" fill="#2a2a2a" text-anchor="middle" font-family="Liberation Sans, sans-serif">0</text>
<text x="580.6" y="219.85" font-size="3" fill="#2a2a2a" text-anchor="middle" font-family="Liberation Sans, sans-serif">1</text>
<text x="610.7" y="219.85" font-size="3" fill="#2a2a2a" text-anchor="middle" font-family="Liberation Sans, sans-serif">0</text>
<text x="641" y="219.85" font-size="3" fill="#2a2a2a" text-anchor="middle" font-family="Liberation Sans, sans-serif">0</text>
<text x="664" y="219.85" font-size="3" fill="#2a2a2a" text-anchor="middle" font-family="Liberation Sans, sans-serif">1</text>
<text x="376.5" y="228.35" font-size="3.6" fill="#3a3a3a" text-anchor="middle" font-family="Liberation Sans, sans-serif">feedback</text>
<text x="430.7" y="228.35" font-size="3" fill="#2a2a2a" text-anchor="middle" font-family="Liberation Sans, sans-serif">1</text>
<text x="464" y="228.35" font-size="3" fill="#2a2a2a" text-anchor="middle" font-family="Liberation Sans, sans-serif">0</text>
<text x="489.8" y="228.35" font-size="3" fill="#2a2a2a" text-anchor="middle" font-family="Liberation Sans, sans-serif">0</text>
<text x="516" y="228.35" font-size="3" fill="#2a2a2a" text-anchor="middle" font-family="Liberation Sans, sans-serif">0</text>
<text x="549" y="228.35" font-size="3" fill="#2a2a2a" text-anchor="middle" font-family="Liberation Sans, sans-serif">0</text>
<text x="580.6" y="228.35" font-size="3" fill="#2a2a2a" text-anchor="middle" font-family="Liberation Sans, sans-serif">0</text>
<text x="610.7" y="228.35" font-size="3" fill="#2a2a2a" text-anchor="middle" font-family="Liberation Sans, sans-serif">0</text>
<text x="641" y="228.35" font-size="3" fill="#2a2a2a" text-anchor="middle" font-family="Liberation Sans, sans-serif">1</text>
<text x="664" y="228.35" font-size="3" fill="#2a2a2a" text-anchor="middle" font-family="Liberation Sans, sans-serif">2</text>
<text x="376.5" y="236.65" font-size="3.6" fill="#3a3a3a" text-anchor="middle" font-family="Liberation Sans, sans-serif">acknowledged</text>
<text x="430.7" y="236.65" font-size="3" fill="#2a2a2a" text-anchor="middle" font-family="Liberation Sans, sans-serif">0</text>
<text x="464" y="236.65" font-size="3" fill="#2a2a2a" text-anchor="middle" font-family="Liberation Sans, sans-serif">0</text>
<text x="489.8" y="236.65" font-size="3" fill="#2a2a2a" text-anchor="middle" font-family="Liberation Sans, sans-serif">0</text>
<text x="516" y="236.65" font-size="3" fill="#2a2a2a" text-anchor="middle" font-family="Liberation Sans, sans-serif">0</text>
<text x="549" y="236.65" font-size="3" fill="#2a2a2a" text-anchor="middle" font-family="Liberation Sans, sans-serif">0</text>
<text x="580.6" y="236.65" font-size="3" fill="#2a2a2a" text-anchor="middle" font-family="Liberation Sans, sans-serif">0</text>
<text x="610.7" y="236.65" font-size="3" fill="#2a2a2a" text-anchor="middle" font-family="Liberation Sans, sans-serif">0</text>
<text x="641" y="236.65" font-size="3" fill="#2a2a2a" text-anchor="middle" font-family="Liberation Sans, sans-serif">0</text>
<text x="664" y="236.65" font-size="3" fill="#2a2a2a" text-anchor="middle" font-family="Liberation Sans, sans-serif">0</text>
<text x="376.5" y="245.00" font-size="3.6" fill="#3a3a3a" text-anchor="middle" font-family="Liberation Sans, sans-serif">confirmed</text>
<text x="430.7" y="245.00" font-size="3" fill="#2a2a2a" text-anchor="middle" font-family="Liberation Sans, sans-serif">0</text>
<text x="464" y="245.00" font-size="3" fill="#2a2a2a" text-anchor="middle" font-family="Liberation Sans, sans-serif">0</text>
<text x="489.8" y="245.00" font-size="3" fill="#2a2a2a" text-anchor="middle" font-family="Liberation Sans, sans-serif">0</text>
<text x="516" y="245.00" font-size="3" fill="#2a2a2a" text-anchor="middle" font-family="Liberation Sans, sans-serif">0</text>
<text x="549" y="245.00" font-size="3" fill="#2a2a2a" text-anchor="middle" font-family="Liberation Sans, sans-serif">0</text>
<text x="580.6" y="245.00" font-size="3" fill="#2a2a2a" text-anchor="middle" font-family="Liberation Sans, sans-serif">0</text>
<text x="610.7" y="245.00" font-size="3" fill="#2a2a2a" text-anchor="middle" font-family="Liberation Sans, sans-serif">0</text>
<text x="641" y="245.00" font-size="3" fill="#2a2a2a" text-anchor="middle" font-family="Liberation Sans, sans-serif">0</text>
<text x="664" y="245.00" font-size="3" fill="#2a2a2a" text-anchor="middle" font-family="Liberation Sans, sans-serif">0</text>
<text x="376.5" y="253.30" font-size="3.6" fill="#3a3a3a" text-anchor="middle" font-family="Liberation Sans, sans-serif">assigned</text>
<text x="430.7" y="253.30" font-size="3" fill="#2a2a2a" text-anchor="middle" font-family="Liberation Sans, sans-serif">4</text>
<text x="464" y="253.30" font-size="3" fill="#2a2a2a" text-anchor="middle" font-family="Liberation Sans, sans-serif">0</text>
<text x="489.8" y="253.30" font-size="3" fill="#2a2a2a" text-anchor="middle" font-family="Liberation Sans, sans-serif">0</text>
<text x="516" y="253.30" font-size="3" fill="#2a2a2a" text-anchor="middle" font-family="Liberation Sans, sans-serif">0</text>
<text x="549" y="253.30" font-size="3" fill="#2a2a2a" text-anchor="middle" font-family="Liberation Sans, sans-serif">2</text>
<text x="580.6" y="253.30" font-size="3" fill="#2a2a2a" text-anchor="middle" font-family="Liberation Sans, sans-serif">6</text>
<text x="610.7" y="253.30" font-size="3" fill="#2a2a2a" text-anchor="middle" font-family="Liberation Sans, sans-serif">2</text>
<text x="641" y="253.30" font-size="3" fill="#2a2a2a" text-anchor="middle" font-family="Liberation Sans, sans-serif">7</text>
<text x="664" y="253.30" font-size="3" fill="#2a2a2a" text-anchor="middle" font-family="Liberation Sans, sans-serif">22</text>
<text x="376.5" y="261.55" font-size="3.6" fill="#3a3a3a" text-anchor="middle" font-family="Liberation Sans, sans-serif">resolved</text>
<text x="430.7" y="261.55" font-size="3" fill="#2a2a2a" text-anchor="middle" font-family="Liberation Sans, sans-serif">4</text>
<text x="464" y="261.55" font-size="3" fill="#2a2a2a" text-anchor="middle" font-family="Liberation Sans, sans-serif">0</text>
<text x="489.8" y="261.55" font-size="3" fill="#2a2a2a" text-anchor="middle" font-family="Liberation Sans, sans-serif">0</text>
<text x="516" y="261.55" font-size="3" fill="#2a2a2a" text-anchor="middle" font-family="Liberation Sans, sans-serif">0</text>
<text x="549" y="261.55" font-size="3" fill="#2a2a2a" text-anchor="middle" font-family="Liberation Sans, sans-serif">8</text>
<text x="580.6" y="261.55" font-size="3" fill="#2a2a2a" text-anchor="middle" font-family="Liberation Sans, sans-serif">33</text>
<text x="610.7" y="261.55" font-size="3" fill="#2a2a2a" text-anchor="middle" font-family="Liberation Sans, sans-serif">0</text>
<text x="641" y="261.55" font-size="3" fill="#2a2a2a" text-anchor="middle" font-family="Liberation Sans, sans-serif">0</text>
<text x="664" y="261.55" font-size="3" fill="#2a2a2a" text-anchor="middle" font-family="Liberation Sans, sans-serif">45</text>
<text x="376.5" y="269.90" font-size="3.6" fill="#3a3a3a" text-anchor="middle" font-family="Liberation Sans, sans-serif">closed</text>
<text x="430.7" y="269.90" font-size="3" fill="#2a2a2a" text-anchor="middle" font-family="Liberation Sans, sans-serif">3</text>
<text x="464" y="269.90" font-size="3" fill="#2a2a2a" text-anchor="middle" font-family="Liberation Sans, sans-serif">0</text>
<text x="489.8" y="269.90" font-size="3" fill="#2a2a2a" text-anchor="middle" font-family="Liberation Sans, sans-serif">0</text>
<text x="516" y="269.90" font-size="3" fill="#2a2a2a" text-anchor="middle" font-family="Liberation Sans, sans-serif">0</text>
<text x="549" y="269.90" font-size="3" fill="#2a2a2a" text-anchor="middle" font-family="Liberation Sans, sans-serif">21</text>
<text x="580.6" y="269.90" font-size="3" fill="#2a2a2a" text-anchor="middle" font-family="Liberation Sans, sans-serif">40</text>
<text x="610.7" y="269.90" font-size="3" fill="#2a2a2a" text-anchor="middle" font-family="Liberation Sans, sans-serif">0</text>
<text x="641" y="269.90" font-size="3" fill="#2a2a2a" text-anchor="middle" font-family="Liberation Sans, sans-serif">10</text>
<text x="664" y="269.90" font-size="3" fill="#2a2a2a" text-anchor="middle" font-family="Liberation Sans, sans-serif">74</text>
<text x="430.7" y="278.10" font-size="3" fill="#2a2a2a" text-anchor="middle" font-family="Liberation Sans, sans-serif">13</text>
<text x="464" y="278.10" font-size="3" fill="#2a2a2a" text-anchor="middle" font-family="Liberation Sans, sans-serif">0</text>
<text x="489.8" y="278.10" font-size="3" fill="#2a2a2a" text-anchor="middle" font-family="Liberation Sans, sans-serif">0</text>
<text x="516" y="278.10" font-size="3" fill="#2a2a2a" text-anchor="middle" font-family="Liberation Sans, sans-serif">0</text>
<text x="549" y="278.10" font-size="3" fill="#2a2a2a" text-anchor="middle" font-family="Liberation Sans, sans-serif">40</text>
<text x="580.6" y="278.10" font-size="3" fill="#2a2a2a" text-anchor="middle" font-family="Liberation Sans, sans-serif">79</text>
<text x="610.7" y="278.10" font-size="3" fill="#2a2a2a" text-anchor="middle" font-family="Liberation Sans, sans-serif">0</text>
<text x="641" y="278.10" font-size="3" fill="#2a2a2a" text-anchor="middle" font-family="Liberation Sans, sans-serif">29</text>
<text x="664" y="278.10" font-size="3" fill="#2a2a2a" text-anchor="middle" font-family="Liberation Sans, sans-serif">145</text>
</svg>
<div class="abs" style="left:341.4px;top:340.6px;width:330.7px;height:172px;background:#efefee;"></div>
<div class="abs" style="left:341.4px;top:340.6px;width:330.7px;height:11.5px;background:linear-gradient(180deg,#f6f6f6,#e4e4e4);border:0.6px solid #bebebe;box-sizing:border-box;"></div>
<div class="abs" style="left:341.4px;top:352.1px;width:330.7px;height:10.9px;background:linear-gradient(180deg,#e9e9e9,#d2d2d2);border-bottom:0.6px solid #b4b4b4;box-sizing:border-box;"></div>
<svg width="700" height="515" viewBox="0 0 700 515">
<defs><linearGradient id="thg" x1="0" y1="0" x2="1" y2="0"><stop offset="0" stop-color="#f2f2f2"/><stop offset="1" stop-color="#d6d6d6"/></linearGradient></defs>
<path d="M341.4 340.6 V512.6 M672.1 340.6 V512.6 M384.6 352.1 V512.6" stroke="#b4b4b4" stroke-width="0.7" fill="none"/>
<path d="M341.4 398.4 H672.1" stroke="#b4b4b4" stroke-width="0.7" fill="none"/>
<rect x="462.8" y="342.1" width="11.2" height="8.6" rx="1" fill="#f0f0f0" stroke="#d6d6d6" stroke-width="0.5"/>
<path d="M466.40000000000003 345.2 V347.6 M470.00000000000006 345.2 L467.20000000000005 346.4 L470.00000000000006 347.6 Z" stroke="#c4c4c4" stroke-width="0.6" fill="#c4c4c4"/>
<rect x="475.7" y="342.1" width="11.2" height="8.6" rx="1" fill="#f0f0f0" stroke="#d6d6d6" stroke-width="0.5"/>
<path d="M481.3 345.2 L478.90000000000003 346.4 L481.3 347.6 Z M483.7 345.2 L481.3 346.4 L483.7 347.6 Z" fill="#c4c4c4"/>
<rect x="525.9" y="342.1" width="11.2" height="8.6" rx="1" fill="#e2e2e2" stroke="#a8a8a8" stroke-width="0.5"/>
<path d="M531.5 345.2 L533.9 346.4 L531.5 347.6 Z M529.1 345.2 L531.5 346.4 L529.1 347.6 Z" fill="#444"/>
<rect x="539.3" y="342.1" width="11.2" height="8.6" rx="1" fill="#e2e2e2" stroke="#a8a8a8" stroke-width="0.5"/>
<path d="M546.9 345.2 V347.6 M543.3 345.2 L546.1 346.4 L543.3 347.6 Z" stroke="#444" stroke-width="0.6" fill="#444"/>
<rect x="662.2" y="445.2" width="9.4" height="67.4" fill="#f3f3f3"/>
<line x1="662.2" y1="445.2" x2="662.2" y2="512.6" stroke="#dcdcdc" stroke-width="0.4"/>
<rect x="662.4" y="456.6" width="8.8" height="15.6" rx="0.9" fill="url(#thg)" stroke="#bcbcbc" stroke-width="0.5"/>
<path d="M664.3 451.6 L666.5 449.4 L668.7 451.6 Z" fill="#555"/>
<path d="M664.8 462.4 H668.6 M664.8 464.2 H668.6 M664.8 466 H668.6" stroke="#8f8f8f" stroke-width="0.6"/>
</svg>
<div class="t b" style="left:496.5px;top:343.10px;letter-spacing:0.092px;font-size:5px;color:#111;">(1 of 18)</div>
<div class="t b" style="left:347.9px;top:354.90px;letter-spacing:-0.068px;font-size:5.2px;color:#151515;">Date</div>
<div class="t b" style="left:365.9px;top:354.90px;letter-spacing:0.060px;font-size:5.2px;color:#151515;">Author</div>
<div class="t b" style="left:517.6px;top:354.90px;letter-spacing:-0.096px;font-size:5.2px;color:#151515;">Message</div>
<div class="t " style="left:342.7px;top:379.10px;letter-spacing:0.011px;font-size:5px;color:#222;">10-09-14</div>
<div class="t " style="left:365.9px;top:379.10px;letter-spacing:-0.149px;font-size:5px;color:#222;">cma</div>
<div class="t " style="left:342.7px;top:413.80px;letter-spacing:0.011px;font-size:5px;color:#222;">03-09-14</div>
<div class="t " style="left:365.9px;top:413.80px;letter-spacing:-0.149px;font-size:5px;color:#222;">cma</div>
<div class="t " style="left:342.7px;top:500.20px;letter-spacing:0.011px;font-size:5px;color:#222;">16-07-14</div>
<div class="t " style="left:365.9px;top:500.20px;letter-spacing:-0.149px;font-size:5px;color:#222;">cma</div>
<div class="abs" style="left:385.8px;top:363.00px;font-size:9.4px;line-height:11px;color:#7f7f7f;-webkit-text-stroke:0.25px #7f7f7f;letter-spacing:0.195px;">modeliolight<span style="position:absolute;left:54.6px;top:0.7px;-webkit-text-stroke:0.12px #858585;font-size:6.6px;letter-spacing:0.177px;color:#858585;">(cma 10-09-14)</span></div>
<div class="abs" style="left:385.8px;top:398.40px;font-size:9.4px;line-height:11px;color:#7f7f7f;-webkit-text-stroke:0.25px #7f7f7f;letter-spacing:0.195px;">modeliolight<span style="position:absolute;left:54.6px;top:0.7px;-webkit-text-stroke:0.12px #858585;font-size:6.6px;letter-spacing:0.177px;color:#858585;">(cma 03-09-14)</span></div>
<div class="abs" style="left:385.8px;top:435.00px;font-size:9.4px;line-height:11px;color:#7f7f7f;-webkit-text-stroke:0.25px #7f7f7f;letter-spacing:0.195px;">modeliolight<span style="position:absolute;left:54.6px;top:0.7px;-webkit-text-stroke:0.12px #858585;font-size:6.6px;letter-spacing:0.177px;color:#858585;">(cma 16-07-14)</span></div>
<div class="t " style="left:386px;top:375.60px;letter-spacing:0.208px;font-size:5.1px;color:#0c0c0c;-webkit-text-stroke:0.1px #0c0c0c;">Fixed compilation error. Détail des changements livrés dans modeliolight : Eléments modifiés : - modeliolight-</div>
<div class="t " style="left:386px;top:383.40px;letter-spacing:0.242px;font-size:5.1px;color:#0c0c0c;-webkit-text-stroke:0.1px #0c0c0c;">worker - modeliolight-worker.com.modeliosoft.constellation.worker.modeliolight.impl.makeramc.RamcProducer -</div>
<div class="t " style="left:386px;top:391.10px;letter-spacing:0.299px;font-size:5.1px;color:#0c0c0c;-webkit-text-stroke:0.1px #0c0c0c;">modeliolight-worker.com.modeliosoft.constellation.worker.modeliolight.worker.ModelioControllerWorkerImpl</div>
<div class="t " style="left:386px;top:410.90px;letter-spacing:0.172px;font-size:5.1px;color:#0c0c0c;-webkit-text-stroke:0.1px #0c0c0c;">Modelio batch service missed deliveries. Détail des changements livrés dans modeliolight : Eléments modifiés : -</div>
<div class="t " style="left:386px;top:418.60px;letter-spacing:0.152px;font-size:5.1px;color:#0c0c0c;-webkit-text-stroke:0.1px #0c0c0c;">modeliotasks-service - modeliotasks-</div>
<div class="t " style="left:386px;top:426.30px;letter-spacing:0.187px;font-size:5.1px;color:#0c0c0c;-webkit-text-stroke:0.1px #0c0c0c;">service.com.modeliosoft.constellation.modeliobatch.service.ModelioBatchService</div>
<div class="t " style="left:386px;top:447.00px;letter-spacing:0.184px;font-size:5.1px;color:#0c0c0c;-webkit-text-stroke:0.1px #0c0c0c;">Automated RAMC packaging seems to work !! &lt;:-P Détail des changements livrés dans constellation-data :</div>
<div class="t " style="left:386px;top:454.62px;letter-spacing:0.173px;font-size:5.1px;color:#0c0c0c;-webkit-text-stroke:0.1px #0c0c0c;">Eléments modifiés : - data Détail des changements livrés dans modeliolight : Eléments modifiés : -</div>
<div class="t " style="left:386px;top:462.24px;letter-spacing:0.218px;font-size:5.1px;color:#0c0c0c;-webkit-text-stroke:0.1px #0c0c0c;">fragmentpublisher-messages.com.modeliosoft.constellation.publisher.messages.PublishToConstellationInfo -</div>
<div class="t " style="left:386px;top:469.86px;letter-spacing:0.207px;font-size:5.1px;color:#0c0c0c;-webkit-text-stroke:0.1px #0c0c0c;">fragmentpublisher-messages.com.modeliosoft.constellation.publisher.messages.PublishToLocalInfo -</div>
<div class="t " style="left:386px;top:477.48px;letter-spacing:0.253px;font-size:5.1px;color:#0c0c0c;-webkit-text-stroke:0.1px #0c0c0c;">fragmentpublisher-tools - fragmentpublisher-</div>
<div class="t " style="left:386px;top:485.10px;letter-spacing:0.256px;font-size:5.1px;color:#0c0c0c;-webkit-text-stroke:0.1px #0c0c0c;">tools.com.modeliosoft.constellation.publisher.PublisherToConstellation - fragmentpublisher-</div>
<div class="t " style="left:386px;top:492.72px;letter-spacing:0.268px;font-size:5.1px;color:#0c0c0c;-webkit-text-stroke:0.1px #0c0c0c;">tools.com.modeliosoft.constellation.publisher.PublisherToConstellation.MultipartUtility - fragmentpublisher-</div>
<div class="t " style="left:386px;top:500.34px;letter-spacing:0.231px;font-size:5.1px;color:#0c0c0c;-webkit-text-stroke:0.1px #0c0c0c;">tools.com.modeliosoft.constellation.publisher.PublisherToConstellation.SslTruster - modeliobatch-worker -</div>
<div class="t " style="left:386px;top:507.96px;letter-spacing:0.242px;font-size:5.1px;color:#0c0c0c;-webkit-text-stroke:0.1px #0c0c0c;">modeliobatch-worker.com.modeliosoft.constellation.worker.modeliobatch.worker.impl.ProcessManager -</div>
<div class="abs" style="left:0;top:512.6px;width:700px;height:3px;background:#4f6b8b;"></div>
</div></body></html>
